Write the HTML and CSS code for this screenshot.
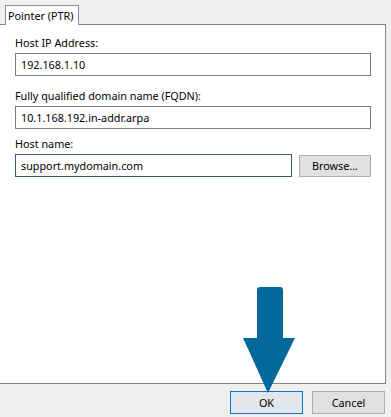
FILE: index.html
```html
<!DOCTYPE html>
<html lang="en">
<head>
  <meta charset="UTF-8" />
  <title>Pointer (PTR)</title>
  <link rel="stylesheet" href="styles.css">
</head>
<body>
  <div class="dialog">
    <div class="tabs">
      <div class="tab">Pointer (PTR)</div>
    </div>

    <div class="panel">
      <div class="field first">
        <label>Host IP Address:</label>
        <div class="input">192.168.1.10</div>
      </div>
      <div class="field second">
        <label>Fully qualified domain name (FQDN):</label>
        <div class="input">10.1.168.192.in-addr.arpa</div>
      </div>
      <div class="field third">
        <label>Host name:</label>
        <div class="row">
          <div class="input focus">support.mydomain.com</div>
          <button class="btn browse">Browse...</button>
        </div>
      </div>
    </div>

    <div class="actions">
      <button class="btn ok">OK</button>
      <button class="btn">Cancel</button>
    </div>
  </div>

  <!-- callout arrow pointing at OK -->
  <svg class="arrow" width="54" height="108" viewBox="0 0 54 108">
    <path d="M14 3 Q14 0 17 0 L37 0 Q40 0 40 3 L40 51 L52 51 L25 106 L0 51 L14 51 Z" fill="#02699a"/>
  </svg>
</body>
</html>
```

FILE: styles.css
```css
body {
  margin: 0;
  background: #f0f0f0;
  font-family: 'Noto Sans', 'DejaVu Sans', sans-serif;
  font-size: 10.8px;
  color: #000;
  width: 391px;
  height: 417px;
  overflow: hidden;
  position: relative;
}

.dialog {
  display: flex;
  flex-direction: column;
}

.tabs {
  display: flex;
  padding: 5px 0 0 5px;
  height: 19px;
}

.tab {
  background: #fff;
  border: 1px solid #8c8c8c;
  border-bottom: none;
  width: 74px;
  box-sizing: border-box;
  padding: 0 0 0 2px;
  line-height: 19px;
  height: 20px;
  white-space: nowrap;
  position: relative;
  z-index: 1;
}

.panel {
  background: #fff;
  border: 1px solid #828282;
  border-left: none;
  width: 386px;
  height: 360px;
  box-sizing: border-box;
  padding: 0 14px 0 15px;
}

.field label {
  display: block;
  line-height: 15px;
  margin-bottom: 3px;
}

.field.first { margin-top: 10px; }
.field.second { margin-top: 12px; }
.field.third { margin-top: 7px; }

.input {
  height: 23px;
  box-sizing: border-box;
  border: 1px solid #7a7a7a;
  padding: 0 5px;
  line-height: 21px;
  background: #fff;
  white-space: nowrap;
}

.input.focus {
  border-color: #3b5a78;
}

.row {
  display: flex;
  gap: 7px;
  align-items: center;
}

.row .input {
  width: 277px;
}

.btn {
  font-family: inherit;
  font-size: 10.8px;
  color: #000;
  background: #e1e1e1;
  border: 1px solid #adadad;
  height: 22px;
  padding: 0;
  box-sizing: border-box;
}

.browse {
  width: 72px;
}

.actions {
  display: flex;
  justify-content: flex-end;
  gap: 9px;
  padding: 7px 6px 0 0;
}

.actions .btn {
  width: 73px;
  height: 23px;
}

.actions .ok {
  border-color: #0078d7;
  background: #e3e6ea;
}

.arrow {
  position: absolute;
  left: 243px;
  top: 287px;
}
```
